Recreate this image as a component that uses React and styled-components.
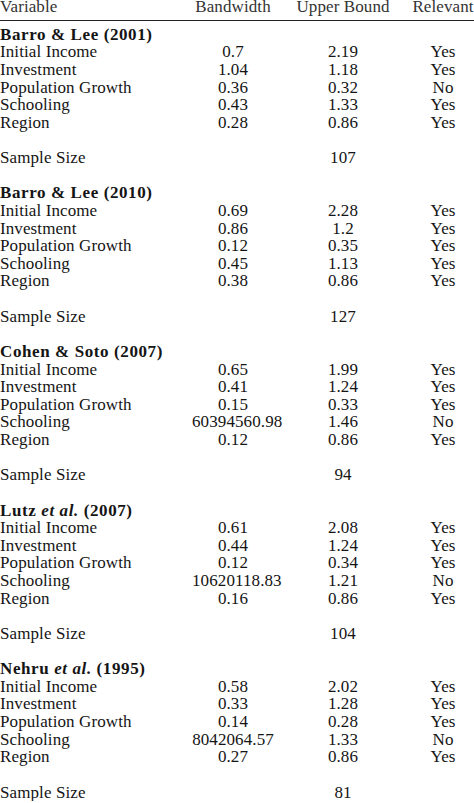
import React from 'react'
import styled, { createGlobalStyle } from 'styled-components'

const Global = createGlobalStyle`
  html, body {
    margin: 0;
    padding: 0;
    background: #fff;
  }
  body {
    font-family: "Liberation Serif", "Times New Roman", serif;
    color: #151515;
    overflow: hidden;
  }
`

const Table = styled.div`
  width: 474px;
  margin-top: -2px;
  font-size: 17px;
  line-height: 17.63px;
`

const Row = styled.div`
  display: grid;
  grid-template-columns: 192px 82px 138px 62px;
  height: 17.63px;
  white-space: nowrap;
  letter-spacing: 0.1px;
`

const HeadRow = styled(Row)`
  padding-bottom: 4px;
  border-bottom: 1px solid #222;
  margin-bottom: 5px;
  color: #333;
`

const Cell = styled.div`
  text-align: ${p => (p.$left ? 'left' : 'center')};
  overflow: visible;
`

const Title = styled.div`
  font-weight: bold;
  height: 17.63px;
  white-space: nowrap;
  letter-spacing: 0.6px;
  em {
    font-style: italic;
  }
`

const Spacer = styled.div`
  height: 17.63px;
`

const blocks = [
  {
    title: <>Barro &amp; Lee (2001)</>,
    rows: [
      ['Initial Income', '0.7', '2.19', 'Yes'],
      ['Investment', '1.04', '1.18', 'Yes'],
      ['Population Growth', '0.36', '0.32', 'No'],
      ['Schooling', '0.43', '1.33', 'Yes'],
      ['Region', '0.28', '0.86', 'Yes'],
    ],
    n: '107',
  },
  {
    title: <>Barro &amp; Lee (2010)</>,
    rows: [
      ['Initial Income', '0.69', '2.28', 'Yes'],
      ['Investment', '0.86', '1.2', 'Yes'],
      ['Population Growth', '0.12', '0.35', 'Yes'],
      ['Schooling', '0.45', '1.13', 'Yes'],
      ['Region', '0.38', '0.86', 'Yes'],
    ],
    n: '127',
  },
  {
    title: <>Cohen &amp; Soto (2007)</>,
    rows: [
      ['Initial Income', '0.65', '1.99', 'Yes'],
      ['Investment', '0.41', '1.24', 'Yes'],
      ['Population Growth', '0.15', '0.33', 'Yes'],
      ['Schooling', '60394560.98', '1.46', 'No'],
      ['Region', '0.12', '0.86', 'Yes'],
    ],
    n: '94',
  },
  {
    title: <>Lutz <em>et al.</em> (2007)</>,
    rows: [
      ['Initial Income', '0.61', '2.08', 'Yes'],
      ['Investment', '0.44', '1.24', 'Yes'],
      ['Population Growth', '0.12', '0.34', 'Yes'],
      ['Schooling', '10620118.83', '1.21', 'No'],
      ['Region', '0.16', '0.86', 'Yes'],
    ],
    n: '104',
  },
  {
    title: <>Nehru <em>et al.</em> (1995)</>,
    rows: [
      ['Initial Income', '0.58', '2.02', 'Yes'],
      ['Investment', '0.33', '1.28', 'Yes'],
      ['Population Growth', '0.14', '0.28', 'Yes'],
      ['Schooling', '8042064.57', '1.33', 'No'],
      ['Region', '0.27', '0.86', 'Yes'],
    ],
    n: '81',
  },
]

export default function App() {
  return (
    <>
      <Global />
      <Table>
        <HeadRow>
          <Cell $left>Variable</Cell>
          <Cell>Bandwidth</Cell>
          <Cell>Upper Bound</Cell>
          <Cell>Relevant</Cell>
        </HeadRow>
        {blocks.map((b, i) => (
          <div key={i}>
            <Title>{b.title}</Title>
            {b.rows.map(r => (
              <Row key={r[0]}>
                <Cell $left>{r[0]}</Cell>
                <Cell>{r[1]}</Cell>
                <Cell>{r[2]}</Cell>
                <Cell>{r[3]}</Cell>
              </Row>
            ))}
            <Spacer />
            <Row>
              <Cell $left>Sample Size</Cell>
              <Cell />
              <Cell>{b.n}</Cell>
              <Cell />
            </Row>
            {i < blocks.length - 1 && <Spacer />}
          </div>
        ))}
      </Table>
    </>
  )
}
